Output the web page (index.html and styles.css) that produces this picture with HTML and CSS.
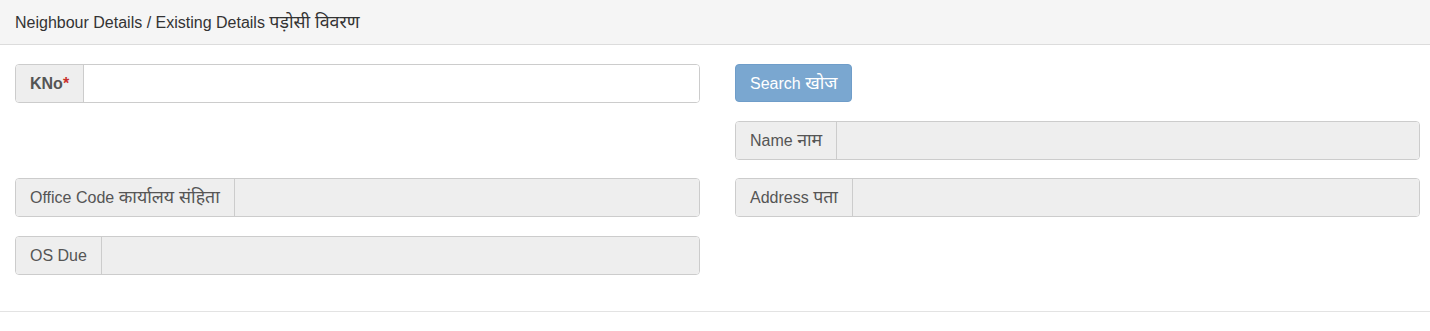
FILE: index.html
```html
<!DOCTYPE html>
<html lang="en">
<head>
<meta charset="utf-8">
<title>Neighbour Details</title>
<link rel="stylesheet" href="styles.css">
</head>
<body>
<div class="panel">
  <div class="panel-heading">Neighbour Details / Existing Details <span class="hi">पड़ोसी विवरण</span></div>
  <div class="panel-body">
    <div class="input-group">
      <span class="addon addon-bold">KNo<span class="req">*</span></span>
      <input class="field" type="text">
    </div>
    <div class="btn-cell">
      <button class="btn" type="button" disabled>Search <span class="hi">खोज</span></button>
    </div>

    <div class="spacer"></div>
    <div class="input-group">
      <span class="addon">Name <span class="hi">नाम</span></span>
      <input class="field" type="text" disabled>
    </div>

    <div class="input-group">
      <span class="addon">Office Code <span class="hi">कार्यालय संहिता</span></span>
      <input class="field" type="text" disabled>
    </div>
    <div class="input-group">
      <span class="addon">Address <span class="hi">पता</span></span>
      <input class="field" type="text" disabled>
    </div>

    <div class="input-group">
      <span class="addon">OS Due</span>
      <input class="field" type="text" disabled>
    </div>
  </div>
</div>
</body>
</html>
```

FILE: styles.css
```css
html, body {
  margin: 0;
  padding: 0;
  background: #fff;
}

body {
  font-family: "Liberation Sans", Arial, "Noto Sans Devanagari", "Noto Sans", sans-serif;
  font-size: 16px;
  color: #333;
}

.hi {
  font-size: 1.11em;
  line-height: 1;
}

.panel {
  border-bottom: 1px solid #e3e3e3;
  background: #fff;
}

.panel-heading {
  background: #f5f5f5;
  border-bottom: 1px solid #dcdcdc;
  height: 44px;
  line-height: 45px;
  padding: 0 15px;
  font-size: 16px;
  color: #333;
}

.panel-body {
  display: grid;
  grid-template-columns: 1fr 1fr;
  grid-auto-rows: 39px;
  column-gap: 35px;
  row-gap: 18.2px;
  padding: 19px 10px 36px 15px;
}

.input-group {
  display: flex;
  align-items: stretch;
  border: 1px solid #ccc;
  border-radius: 4px;
  overflow: hidden;
  box-sizing: border-box;
  height: 39px;
}

.addon {
  display: flex;
  align-items: center;
  gap: 0.28em;
  padding: 1px 14px 0;
  background: #eee;
  border-right: 1px solid #ccc;
  color: #555;
  font-size: 16px;
  white-space: nowrap;
}

.addon-bold {
  font-weight: bold;
  gap: 0;
}

.req {
  color: #c9302c;
}

.field {
  flex: 1;
  min-width: 0;
  border: 0;
  margin: 0;
  padding: 0 12px;
  background: #fff;
  font: inherit;
  outline: none;
}

.field:disabled {
  background: #eee;
}

.btn-cell {
  display: flex;
  align-items: flex-start;
}

.btn {
  height: 38px;
  padding: 1px 14px 0;
  border: 1px solid #6f9dc9;
  border-radius: 4px;
  background: #7aa7d0;
  color: #fff;
  font-family: inherit;
  font-size: 16px;
  cursor: not-allowed;
}
```
